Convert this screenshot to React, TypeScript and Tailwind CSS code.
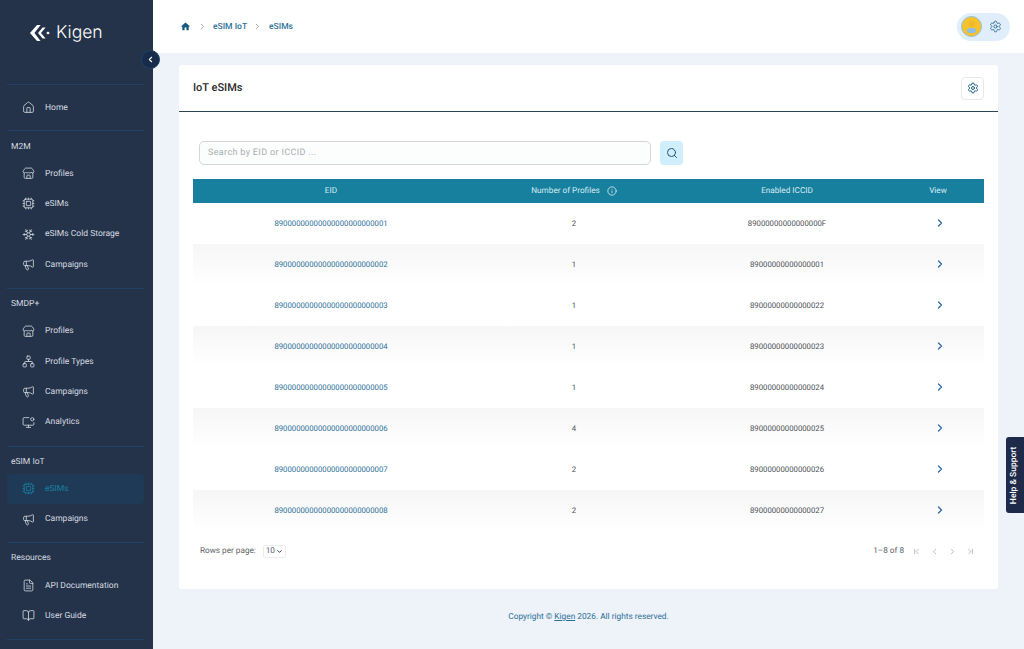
import { BookOpen, ChevronFirst, ChevronLast, ChevronDown, ChevronLeft, ChevronRight, Cpu, FileText, Home, Info, Megaphone, MonitorDot, Network, Search, Settings, Snowflake, Store } from "lucide-react";
import { MdHome } from "react-icons/md";

const rows = [
  { eid: "89000000000000000000000001", count: 2, iccid: "89000000000000000F" },
  { eid: "89000000000000000000000002", count: 1, iccid: "89000000000000001" },
  { eid: "89000000000000000000000003", count: 1, iccid: "89000000000000022" },
  { eid: "89000000000000000000000004", count: 1, iccid: "89000000000000023" },
  { eid: "89000000000000000000000005", count: 1, iccid: "89000000000000024" },
  { eid: "89000000000000000000000006", count: 4, iccid: "89000000000000025" },
  { eid: "89000000000000000000000007", count: 2, iccid: "89000000000000026" },
  { eid: "89000000000000000000000008", count: 2, iccid: "89000000000000027" },
];

function NavItem({ icon: Icon, label, active }: { icon: typeof Home; label: string; active?: boolean }) {
  return (
    <div className={`flex h-[30.4px] items-center rounded-sm pl-[14.5px] ${active ? "bg-[#1f3a57] text-[#1a7f9f]" : "text-[#d5dae1]"}`}>
      <Icon className="size-[13px]" strokeWidth={1.5} />
      <span className="ml-[10.5px] pt-[1px] text-[8.5px]">{label}</span>
    </div>
  );
}

function Section({ title, children }: { title: string; children: React.ReactNode }) {
  return (
    <div className="border-b border-[#1f4266] pb-[8px]">
      <div className="flex h-[27px] items-center pl-[4px] pt-[4px] text-[8.5px] text-[#d5dae1]">{title}</div>
      {children}
    </div>
  );
}

export default function App() {
  return (
    <div className="flex h-[649px] w-[1024px] overflow-hidden bg-[#eef2f9] font-['Roboto',sans-serif] [text-rendering:geometricPrecision]">
      {/* Sidebar */}
      <aside className="relative w-[153px] shrink-0 bg-[#243349]">
        <div className="flex h-[66px] items-center pl-[30px] text-white">
          <svg viewBox="0 0 20 16" className="h-[16px] w-[20px]" fill="currentColor">
            <path d="M7 0h3.6L4.4 8l6.2 8H7L0 8z" />
            <path d="M12.6 2.5h3L11 8l4.6 5.5h-3L8 8z" />
            <path d="M18 6.4 19.8 8 18 9.6 16.2 8z" />
          </svg>
          <span className="ml-[6px] font-['Inter',sans-serif] text-[17.5px] font-light leading-none">Kigen</span>
        </div>
        <div className="ml-[7px] mr-[9px]">
          <div className="mt-[18px] border-y border-[#1f4266] py-[7.5px]">
            <NavItem icon={Home} label="Home" />
          </div>
          <Section title="M2M">
            <NavItem icon={Store} label="Profiles" />
            <NavItem icon={Cpu} label="eSIMs" />
            <NavItem icon={Snowflake} label="eSIMs Cold Storage" />
            <NavItem icon={Megaphone} label="Campaigns" />
          </Section>
          <Section title="SMDP+">
            <NavItem icon={Store} label="Profiles" />
            <NavItem icon={Network} label="Profile Types" />
            <NavItem icon={Megaphone} label="Campaigns" />
            <NavItem icon={MonitorDot} label="Analytics" />
          </Section>
          <Section title="eSIM IoT">
            <NavItem icon={Cpu} label="eSIMs" active />
            <NavItem icon={Megaphone} label="Campaigns" />
          </Section>
          <Section title="Resources">
            <NavItem icon={FileText} label="API Documentation" />
            <NavItem icon={BookOpen} label="User Guide" />
          </Section>
        </div>
        <button className="absolute left-[141px] top-[50px] flex size-[19px] items-center justify-center rounded-full border border-[#1f4266] bg-[#172b4a] text-white">
          <ChevronLeft className="size-[9px]" strokeWidth={3} />
        </button>
      </aside>

      {/* Main */}
      <main className="flex min-w-0 flex-1 flex-col">
        <header className="flex h-[53px] shrink-0 items-center justify-between bg-white pl-[27px] pr-[14px]">
          <div className="flex items-center text-[8.5px] font-medium text-[#2d7396]">
            <MdHome className="size-[11px] text-[#155a80]" />
            <ChevronRight className="ml-[6.5px] size-[9px] text-[#888]" />
            <span className="ml-[6.5px] pt-[1px]">eSIM IoT</span>
            <ChevronRight className="ml-[5.5px] size-[9px] text-[#888]" />
            <span className="ml-[7.5px] pt-[1px]">eSIMs</span>
          </div>
          <div className="flex h-[28px] w-[53px] items-center rounded-full bg-[#e0eefb] pl-[4px]">
            <div className="relative flex size-[21px] items-center justify-center overflow-hidden rounded-full border border-[#8fc0e0] bg-[#f5c22c]">
              <div className="absolute top-[3.5px] size-[6px] rounded-full bg-[#efb92a]" />
              <div className="absolute top-[10.5px] h-[5.5px] w-[9px] rounded-full bg-[#8fbfe0]" />
            </div>
            <Settings className="ml-[7px] size-[13px] text-[#1c5f85]" strokeWidth={1.5} />
          </div>
        </header>

        <div className="flex-1 px-[26px] pt-[12px]">
          <section className="h-[524px] rounded-[3px] bg-white">
            <div className="flex h-[47px] items-center justify-between border-b border-[#2c4454] pl-[14px] pr-[14px]">
              <h1 className="text-[11px] font-medium text-[#2a2a2a]">IoT eSIMs</h1>
              <button className="flex size-[23px] items-center justify-center rounded-[4px] border border-[#e8e8e8] bg-white">
                <Settings className="size-[12px] text-[#1c5f85]" strokeWidth={2} />
              </button>
            </div>

            <div className="px-[14px]">
              <div className="ml-[6px] mt-[29px] flex gap-[9px]">
                <div className="flex h-[24px] w-[452px] items-center rounded-[5px] border border-[#d6d6d6] bg-[#fcfdfd] pl-[8px] pt-[1px] text-[9px] tracking-[0.35px] text-[#a9adb2]">
                  Search by EID or ICCID ...
                </div>
                <button className="flex h-[24px] w-[23px] items-center justify-center rounded-[4px] bg-[#cfeffd] text-[#27566e]">
                  <Search className="size-[12px]" strokeWidth={2} />
                </button>
              </div>

              <table className="mt-[14px] w-[791px] table-fixed border-collapse">
                <colgroup>
                  <col className="w-[276px]" />
                  <col className="w-[210px]" />
                  <col className="w-[216px]" />
                  <col className="w-[89px]" />
                </colgroup>
                <thead>
                  <tr className="h-[24px] bg-[#17809f] text-[8.2px] font-normal text-[#d9ecf2]">
                    <th className="font-normal">EID</th>
                    <th className="font-normal">
                      <span className="inline-flex items-center gap-[7px]">
                        Number of Profiles <Info className="size-[10px]" />
                      </span>
                    </th>
                    <th className="font-normal">Enabled ICCID</th>
                    <th className="pr-[3px] font-normal">View</th>
                  </tr>
                </thead>
                <tbody>
                  {rows.map((r, i) => (
                    <tr key={r.eid} className={`h-[41px] text-[7.75px] text-[#4b4f55] ${i % 2 === 1 ? "bg-gradient-to-b from-[#f6f6f6] to-white" : "bg-white"}`}>
                      <td className="text-center text-[#2b7097]">{r.eid}</td>
                      <td className="text-center">{r.count}</td>
                      <td className="text-center">{r.iccid}</td>
                      <td>
                        <ChevronRight className="mx-auto -mt-[1px] size-[12px] text-[#2f6aa8]" strokeWidth={2.6} />
                      </td>
                    </tr>
                  ))}
                </tbody>
              </table>

              <div className="flex h-[40px] items-center justify-between pl-[7px] pr-[9px] pt-[1px] text-[8.2px] text-[#5d6166]">
                <div className="flex items-center">
                  <span>Rows per page:</span>
                  <span className="ml-[7px] flex h-[13px] w-[23px] items-center justify-center gap-[1px] rounded-[2px] border border-[#ececec]">
                    10 <ChevronDown className="size-[7px] text-[#222]" strokeWidth={3} />
                  </span>
                </div>
                <div className="flex items-center">
                  <span className="mr-[8px]">1–8 of 8</span>
                  <div className="flex items-center gap-[9px] text-[#a4a8ad]">
                    <ChevronFirst className="size-[9px]" />
                    <ChevronLeft className="size-[9px]" />
                    <ChevronRight className="size-[9px]" />
                    <ChevronLast className="size-[9px]" />
                  </div>
                </div>
              </div>
            </div>
          </section>

          <footer className="pt-[22px] text-center text-[8.3px] text-[#2b7097]">
            Copyright © <span className="underline">Kigen</span> 2026. All rights reserved.
          </footer>
        </div>
      </main>

      {/* Help tab */}
      <div className="absolute left-[1006px] top-[437px] flex h-[76px] w-[18px] items-center justify-center rounded-l-[3px] bg-[#1e2a4a]">
        <span className="-rotate-90 whitespace-nowrap text-[8.5px] font-medium text-white">Help &amp; Support</span>
      </div>
    </div>
  );
}
